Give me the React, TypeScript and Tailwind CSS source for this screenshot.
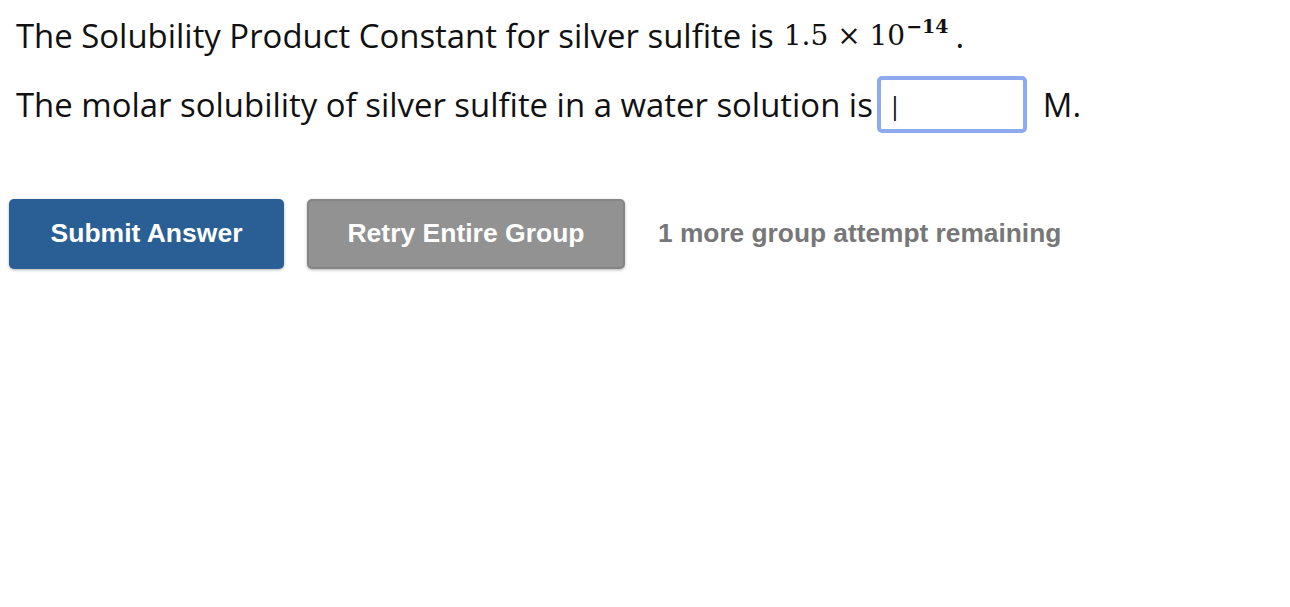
export default function App() {
  return (
    <div className="w-[1290px] h-[607px] bg-white text-black">
      <div className="pl-[16px] pt-[12px] font-['Open_Sans',sans-serif] text-[32.9px] text-[#111]">
        <div className="h-[48px] flex items-center whitespace-nowrap">
          <span>The Solubility Product Constant for silver sulfite is</span>
          <span className="ml-[10px] font-['DejaVu_Serif',serif] text-[28px]">1.5 × 10</span>
          <sup className="ml-[1px] font-['DejaVu_Serif',serif] text-[19px] font-bold relative -top-[10px]">−14</sup>
          <span className="ml-[7px]">.</span>
        </div>
        <div className="mt-[16px] flex items-center whitespace-nowrap">
          <span>The molar solubility of silver sulfite in a water solution is</span>
          <div className="ml-[4px] w-[150px] h-[57px] border-[4px] border-[#8ea9ee] rounded-[5px] bg-white flex items-center pl-[7px]">
            <span className="text-[26px] leading-none">|</span>
          </div>
          <span className="ml-[16px]">M.</span>
        </div>
      </div>
      <div className="mt-[66px] pl-[9px] flex items-center gap-[23px] font-['Liberation_Sans',sans-serif] font-bold">
        <button className="w-[275px] h-[70px] rounded-[5px] bg-[#2a5f95] text-white text-[26.5px] shadow-[0_1px_3px_rgba(0,0,0,0.3)]">Submit Answer</button>
        <button className="w-[318px] h-[70px] rounded-[5px] bg-[#929292] border-[2px] border-[#858585] text-white text-[26.5px] shadow-[0_1px_3px_rgba(0,0,0,0.3)]">Retry Entire Group</button>
        <span className="ml-[10px] text-[#777] text-[26.3px]">1 more group attempt remaining</span>
      </div>
    </div>
  );
}
